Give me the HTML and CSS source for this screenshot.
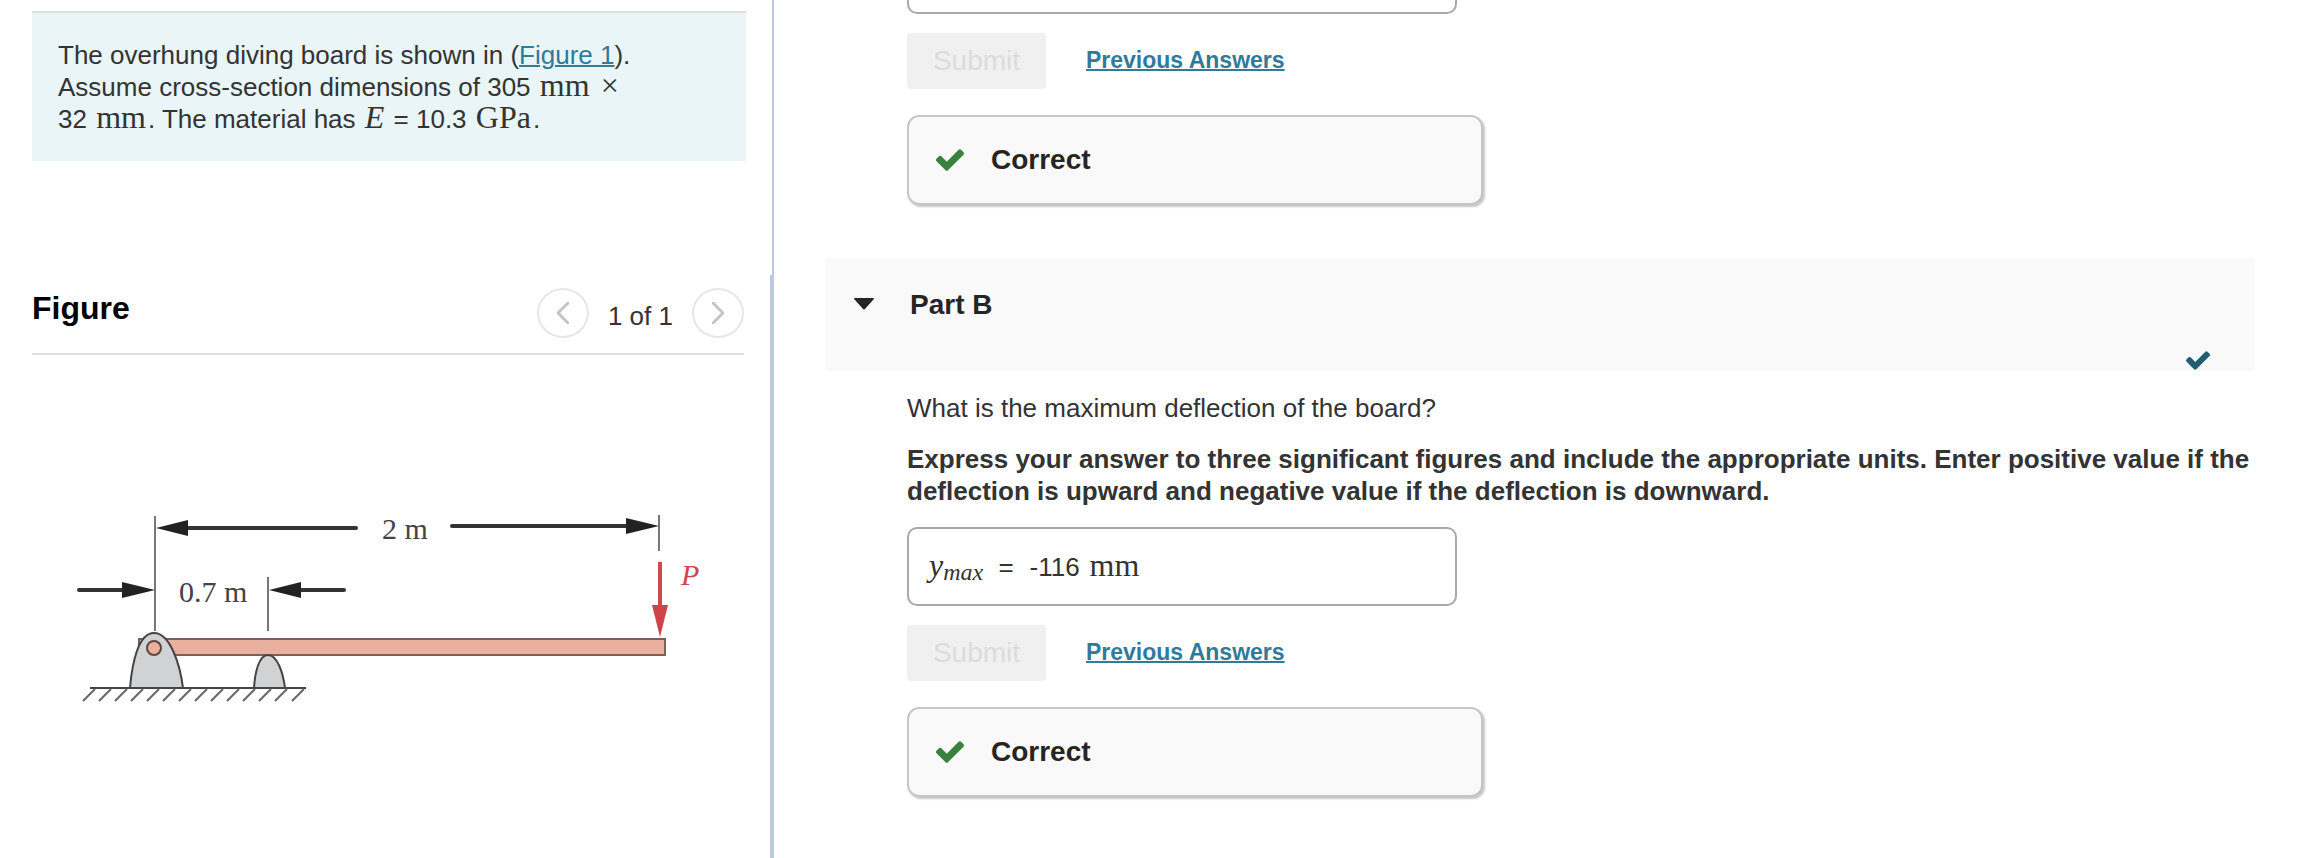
FILE: index.html
```html
<!DOCTYPE html>
<html lang="en">
<head>
    <meta charset="UTF-8">
    <meta name="viewport" content="width=device-width, initial-scale=1.0">
    <title>Diving board</title>
    <link rel="stylesheet" href="styles.css">
</head>
<body>
    <div class="left-pane">
        <section class="problem">
            <div class="problem-text">
                The overhung diving board is shown in (<a href="#figure">Figure 1</a>).<br>
                Assume cross-section dimensions of 305 <span class="math">mm</span> <span class="math">&times;</span><br>
                32 <span class="math">mm</span>. The material has <i class="math">E</i> = 10.3 <span class="math">GPa</span>.
            </div>
        </section>

        <section class="figure" id="figure">
            <div class="figure-header">
                <h2>Figure</h2>
                <div class="pager">
                    <button type="button" class="pager-btn" aria-label="Previous figure">
                        <svg width="12" height="22" viewBox="0 0 12 22"><path d="M11 1 L1 11 L11 21"/></svg>
                    </button>
                    <span class="pager-count">1 of 1</span>
                    <button type="button" class="pager-btn" aria-label="Next figure">
                        <svg width="12" height="22" viewBox="0 0 12 22"><path d="M1 1 L11 11 L1 21"/></svg>
                    </button>
                </div>
            </div>

            <svg class="diagram" width="660" height="220" viewBox="60 500 660 220">
                <!-- extension lines -->
                <g class="thin">
                    <path d="M155 516V631"/>
                    <path d="M268 577V631"/>
                    <path d="M659 515V551"/>
                </g>
                <!-- dimension lines -->
                <g class="dim">
                    <path d="M180 528H356"/>
                    <path d="M452 526H634"/>
                    <path d="M79 590H130"/>
                    <path d="M294 590H344"/>
                </g>
                <g class="head">
                    <path d="M156 528L188 520V536Z"/>
                    <path d="M659 526L626 518V534Z"/>
                    <path d="M155 590L122 582V598Z"/>
                    <path d="M269 590L301 582V598Z"/>
                </g>
                <text x="382" y="539">2 m</text>
                <text x="179" y="602">0.7 m</text>
                <!-- board -->
                <rect class="board" x="139" y="639" width="526" height="16"/>
                <!-- supports -->
                <path class="support" d="M130 688C132 664 138 633 154 633C170 633 180 664 183 688"/>
                <circle class="pin" cx="154" cy="648" r="7"/>
                <path class="support" d="M254 688C255 672 259 655 268 655C277 655 283 672 285 688"/>
                <path class="ground" d="M90 688H306"/>
                <path class="hatch" d="M95 689L83 701M111 689L99 701M127 689L115 701M143 689L131 701M159 689L147 701M175 689L163 701M191 689L179 701M207 689L195 701M223 689L211 701M239 689L227 701M255 689L243 701M271 689L259 701M287 689L275 701M304 689L292 701"/>
                <!-- load -->
                <path class="load-line" d="M660 562V610"/>
                <path class="load-head" d="M660 637L652 605H668Z"/>
                <text class="load-text" x="681" y="585">P</text>
            </svg>
        </section>
    </div>

    <main class="right-pane">
        <div class="part-body">
            <div class="answer-box answer-box-cut"></div>
            <div class="actions">
                <button type="button" class="submit-btn" disabled>Submit</button>
                <a href="#" class="previous">Previous Answers</a>
            </div>
            <div class="feedback">
                <svg class="check" width="28" height="22" viewBox="121 334 1550 1188"><path d="M1671 566q0 40-28 68l-724 724-136 136q-28 28-68 28t-68-28l-136-136-362-362q-28-28-28-68t28-68l136-136q28-28 68-28t68 28l294 295 656-657q28-28 68-28t68 28l136 136q28 28 28 68z"/></svg>
                Correct
            </div>
        </div>

        <div class="part-header">
            <svg class="caret" width="20" height="12" viewBox="0 0 20 12"><path d="M1 0H19Q21 0 19 2L11 11Q10 12 9 11L1 2Q-1 0 1 0Z"/></svg>
            <h3>Part B</h3>
            <svg class="part-done" width="24" height="19" viewBox="121 334 1550 1188"><path d="M1671 566q0 40-28 68l-724 724-136 136q-28 28-68 28t-68-28l-136-136-362-362q-28-28-28-68t28-68l136-136q28-28 68-28t68 28l294 295 656-657q28-28 68-28t68 28l136 136q28 28 28 68z"/></svg>
        </div>

        <div class="part-body">
            <p>What is the maximum deflection of the board?</p>
            <p class="instructions">Express your answer to three significant figures and include the appropriate units. Enter positive value if the deflection is upward and negative value if the deflection is downward.</p>
            <div class="answer-box">
                <label for="ymax"><i class="math">y</i><i class="math-sub">max</i> <span class="equals">=</span></label>
                <input type="text" id="ymax" value="-116" readonly>
                <span class="math">mm</span>
            </div>
            <div class="actions">
                <button type="button" class="submit-btn" disabled>Submit</button>
                <a href="#" class="previous">Previous Answers</a>
            </div>
            <div class="feedback">
                <svg class="check" width="28" height="22" viewBox="121 334 1550 1188"><path d="M1671 566q0 40-28 68l-724 724-136 136q-28 28-68 28t-68-28l-136-136-362-362q-28-28-28-68t28-68l136-136q28-28 68-28t68 28l294 295 656-657q28-28 68-28t68 28l136 136q28 28 28 68z"/></svg>
                Correct
            </div>
        </div>
    </main>
</body>
</html>
```

FILE: styles.css
```css
* {
    box-sizing: border-box;
}
body {
    display: grid;
    grid-template-columns: 43fr 85fr;
    min-height: 100vh;
    margin: 0;
    font-family: "Liberation Sans", Arial, sans-serif;
    font-size: 26px;
    line-height: 32px;
    color: #333;
    background-color: #fff;
}
h2, h3, p {
    margin: 0;
}
a {
    color: #307a9c;
    text-decoration-thickness: 2px;
}
.math {
    font-family: "Liberation Serif", "Times New Roman", serif;
    font-size: 32px;
    line-height: 1px;
}
.math-sub {
    font-family: "Liberation Serif", "Times New Roman", serif;
    font-size: 24px;
    line-height: 1px;
    vertical-align: -4px;
}
.problem-text .math {
    margin: 0 2px;
}

/* Left pane */
.left-pane {
    display: flex;
    flex-direction: column;
}
.problem {
    padding: 11px 26px 114px 32px;
    border-right: 2px solid #bccade;
}
.problem-text {
    padding: 26px;
    border-top: 2px solid #ddd;
    background-color: #e9f5f7;
}
.figure {
    flex: 1;
    padding: 13px 26px 0 32px;
    border-right: 4px solid #bccade;
}
.figure-header {
    display: flex;
    justify-content: space-between;
    align-items: center;
    padding-bottom: 15px;
    border-bottom: 2px solid #ddd;
}
.figure-header h2 {
    padding-bottom: 10px;
    font-size: 32px;
    color: #000;
}
.pager {
    display: flex;
    align-items: center;
    gap: 19px;
}
.pager-count {
    padding-top: 6px;
}
.pager-btn {
    display: flex;
    align-items: center;
    justify-content: center;
    width: 52px;
    height: 50px;
    padding: 0;
    border: 2px solid #e6e6e6;
    border-radius: 50%;
    background: #fff;
}
.pager-btn path {
    fill: none;
    stroke: #c4c4c4;
    stroke-width: 3;
    stroke-linecap: round;
}

/* Diagram */
.diagram {
    display: block;
    margin: 145px 0 0 28px;
}
.diagram text {
    font-family: "Liberation Serif", "Times New Roman", serif;
    font-size: 30px;
    fill: #444;
}
.diagram .load-text {
    font-style: italic;
    fill: #d1434b;
}
.thin {
    stroke: #777;
    stroke-width: 2;
}
.dim {
    stroke: #333;
    stroke-width: 4;
    stroke-linecap: round;
}
.head {
    fill: #222;
}
.board {
    fill: #e9b09f;
    stroke: #7b605a;
    stroke-width: 2;
}
.support {
    fill: #d1d2d4;
    stroke: #444;
    stroke-width: 2;
}
.pin {
    fill: #e9b09f;
    stroke: #5e4640;
    stroke-width: 2;
}
.ground {
    stroke: #444;
    stroke-width: 2;
}
.hatch {
    stroke: #666;
    stroke-width: 2;
}
.load-line {
    stroke: #cc4a50;
    stroke-width: 4;
}
.load-head {
    fill: #d1434b;
}

/* Right pane */
.right-pane {
    padding: 0 50px 0 52px;
}
.part-body {
    padding-left: 81px;
}
.answer-box {
    display: flex;
    align-items: baseline;
    width: 550px;
    height: 79px;
    padding: 22px 20px;
    border: 2px solid #a9a9a9;
    border-radius: 10px;
}
.answer-box-cut {
    height: 14px;
    padding: 0;
    border-top: none;
    border-radius: 0 0 10px 10px;
}
.answer-box input {
    width: 52px;
    margin: 0 8px 0 16px;
    padding: 0;
    border: none;
    font: inherit;
    color: inherit;
    background: none;
}
.equals {
    margin-left: 8px;
}
.actions {
    display: flex;
    align-items: center;
    gap: 40px;
    margin-top: 19px;
}
.submit-btn {
    width: 139px;
    height: 56px;
    padding: 0;
    border: none;
    border-radius: 4px;
    font-family: inherit;
    font-size: 28px;
    color: #dcdcdc;
    background-color: #f0f0f0;
}
.previous {
    padding-bottom: 2px;
    font-size: 23px;
    font-weight: bold;
}
.feedback {
    display: flex;
    align-items: center;
    gap: 27px;
    width: 576px;
    height: 90px;
    margin-top: 26px;
    padding-left: 27px;
    border: 2px solid #c6c6c6;
    border-radius: 12px;
    font-size: 28px;
    font-weight: bold;
    color: #252525;
    background-color: #f9f9f9;
    box-shadow: 2px 2px 2px #c8c8c8;
}
.check {
    fill: #38813f;
}
.part-header {
    display: flex;
    align-items: flex-start;
    height: 113px;
    margin: 53px 0 21px;
    padding: 31px 44px 1px 28px;
    background-color: #f9f9f9;
}
.part-header h3 {
    margin-left: 36px;
    font-size: 28px;
    color: #252525;
}
.caret {
    margin-top: 9px;
    fill: #252525;
}
.part-done {
    align-self: flex-end;
    margin-left: auto;
    fill: #235d70;
}
.instructions {
    margin: 19px 0 20px;
    font-weight: bold;
}
```
